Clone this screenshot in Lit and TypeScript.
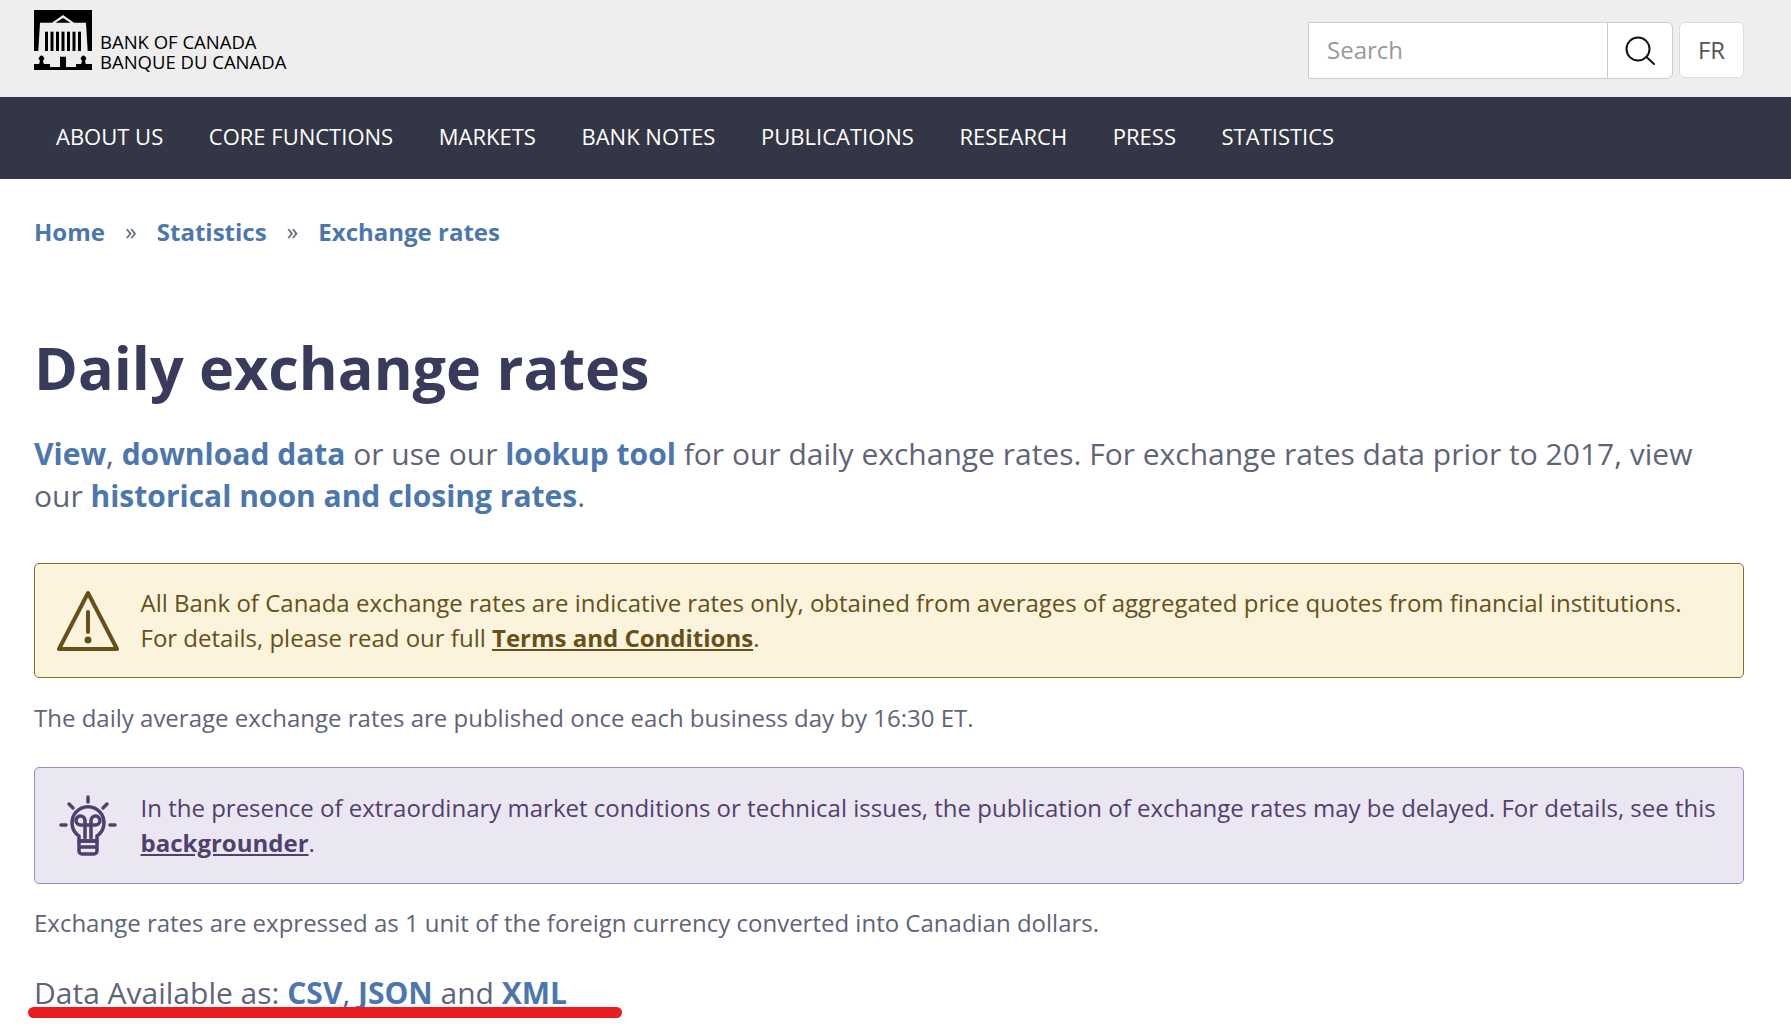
import { LitElement, html, css } from "lit";
import { customElement } from "lit/decorators.js";

@customElement("app-root")
export class AppRoot extends LitElement {
  static styles = css`
    :host { display: block; height: 1033px; overflow: hidden; position: relative; font-family: "Open Sans", sans-serif; color: #5f6478; background: #fff; }
    a { color: #4b77ae; font-weight: 700; text-decoration: none; }
    .top { height: 97px; background: #eee; display: flex; justify-content: space-between; padding: 0 47px 0 34px; box-sizing: border-box; }
    .logo { display: flex; align-items: flex-end; gap: 8px; height: 60px; margin-top: 10px; color: #000; }
    .logo svg { display: block; }
    .logo-text { font-size: 18.5px; line-height: 19.4px; margin-bottom: -1px; white-space: nowrap; }
    .tools { display: flex; gap: 6px; padding-top: 22px; align-items: flex-start; }
    .search { display: flex; width: 365px; height: 57px; background: #fff; border: 1px solid #ccc; border-radius: 0 6px 6px 0; box-sizing: border-box; }
    .input { flex: 1; color: #999; font-size: 24px; padding: 0 0 2px 18px; display: flex; align-items: center; }
    .btn { width: 64px; border-left: 1px solid #ccc; display: flex; align-items: center; justify-content: center; }
    .fr { width: 65px; height: 56px; box-sizing: border-box; background: #fff; border: 1px solid #ddd; border-radius: 6px; font-size: 24px; color: #555; display: flex; align-items: center; justify-content: center; padding-bottom: 1px; }
    nav { height: 82px; background: #333644; display: flex; align-items: center; padding: 0 0 5px 56px; box-sizing: border-box; gap: 45.6px; color: #fff; font-size: 22px; white-space: nowrap; }
    main { padding: 0 47px 0 34px; }
    .crumbs { display: flex; align-items: center; font-size: 24px; height: 36px; margin-top: 34px; gap: 20.2px; }
    .sep { color: #5f6478; font-size: 23px; }
    h1 { margin: 78px 0 0; font-size: 59.3px; line-height: 80px; color: #383b5b; font-weight: 700; }
    .lead { margin: 26px 0 0; font-size: 30px; line-height: 42px; }
    .box { display: flex; align-items: center; border-radius: 5px; font-size: 24px; line-height: 35px; box-sizing: border-box; border: 1px solid; }
    .box svg { flex: none; margin: 0 21.5px 0 22px; }
    .box a { text-decoration: underline; color: inherit; }
    .box > div { padding-bottom: 2px; }
    .warn { height: 115px; margin-top: 46px; background: #fcf3dc; border-color: #8b6f23; color: #65501a; }
    .info { height: 117px; background: #ebe7f2; border-color: #9a8cc0; color: #50406e; }
    p { margin: 0; font-size: 24px; line-height: 35px; }
    .p1 { padding: 22px 0 32px; }
    .p2 { padding: 21px 0 0; }
    .data { margin-top: 32px; font-size: 30px; line-height: 42px; white-space: nowrap; }
    .mark { position: absolute; left: 28px; top: 1007px; width: 594px; height: 11px; background: #e81d1d; border-radius: 6px; }
  `;

  render() {
    return html`
      <div class="top">
        <div class="logo">
          <svg width="58" height="60" viewBox="0 0 58 60">
            <rect width="58" height="60" fill="#000"/>
            <path fill="#eee" d="M6 12.700H18L29 5 40 12.700H52L53.700 41H58V54H42V60H16V54H0V41H4.300z"/>
            <path fill="#000" d="M21.500 12.700L29 8 36.500 12.700z"/>
            <g fill="#000">
              <rect x="11" y="21.700" width="3" height="19.300"/><rect x="16.500" y="21.700" width="3" height="19.300"/><rect x="22" y="21.700" width="3" height="19.300"/><rect x="27.500" y="21.700" width="3" height="19.300"/><rect x="33" y="21.700" width="3" height="19.300"/><rect x="38.500" y="21.700" width="3" height="19.300"/><rect x="44" y="21.700" width="3" height="19.300"/>
              <path d="M5.200 54l.8-3.500a2.600 2.600 0 1 1 3 0l.8 3.500zM47.200 54l.8-3.500a2.600 2.600 0 1 1 3 0l.8 3.500zM0 54h16v6H0zM42 54h16v6H42zM16 57h26v3H16zM26 46.700h6V58h-6z"/>
            </g>
          </svg>
          <div class="logo-text">BANK OF CANADA<br />BANQUE DU CANADA</div>
        </div>
        <div class="tools">
          <div class="search">
            <div class="input">Search</div>
            <div class="btn">
              <svg width="30" height="30" viewBox="0 0 30 30" fill="none" stroke="#111" stroke-width="2"><circle cx="13" cy="13" r="11.500"/><path d="M21.500 21l7.500 7" stroke-linecap="round"/></svg>
            </div>
          </div>
          <div class="fr">FR</div>
        </div>
      </div>
      <nav>
        <span>ABOUT US</span><span>CORE FUNCTIONS</span><span>MARKETS</span><span>BANK NOTES</span><span>PUBLICATIONS</span><span>RESEARCH</span><span>PRESS</span><span>STATISTICS</span>
      </nav>
      <main>
        <div class="crumbs"><a>Home</a><span class="sep">»</span><a>Statistics</a><span class="sep">»</span><a>Exchange rates</a></div>
        <h1>Daily exchange rates</h1>
        <div class="lead"><a>View</a>, <a>download data</a> or use our <a>lookup tool</a> for our daily exchange rates. For exchange rates data prior to 2017, view our <a>historical noon and closing rates</a>.</div>
        <div class="box warn">
          <svg width="62" height="62" viewBox="0 0 62 62" fill="none" stroke="#65501a" stroke-width="4" stroke-linecap="round" stroke-linejoin="round"><path d="M31 3L2 59h58z"/><path d="M31 22v20"/><circle cx="31" cy="50" r="1.500" fill="#65501a"/></svg>
          <div>All Bank of Canada exchange rates are indicative rates only, obtained from averages of aggregated price quotes from financial institutions.<br />For details, please read our full <a>Terms and Conditions</a>.</div>
        </div>
        <p class="p1">The daily average exchange rates are published once each business day by 16:30 ET.</p>
        <div class="box info">
          <svg width="62" height="62" viewBox="0 0 62 62" fill="none" stroke="#50406e" stroke-width="3.500" stroke-linecap="round" stroke-linejoin="round"><path d="M31 2v5M12 9l4 4M50 9l-4 4M4 30h5M53 30h5"/><path d="M22 46v-5a16 16 0 1 1 18 0v5z"/><path d="M22 46h18v10a3 3 0 0 1-3 3H25a3 3 0 0 1-3-3zM22 52h18"/><path d="M28 43V30h-4a4.500 4.500 0 1 1 4-4.500V30h6v-4.500a4.500 4.500 0 1 1 4 4.500h-4v13"/></svg>
          <div>In the presence of extraordinary market conditions or technical issues, the publication of exchange rates may be delayed. For details, see this <a>backgrounder</a>.</div>
        </div>
        <p class="p2">Exchange rates are expressed as 1 unit of the foreign currency converted into Canadian dollars.</p>
        <div class="data">Data Available as: <a>CSV</a>, <a>JSON</a> and <a>XML</a></div>
      </main>
      <div class="mark"></div>
    `;
  }
}
